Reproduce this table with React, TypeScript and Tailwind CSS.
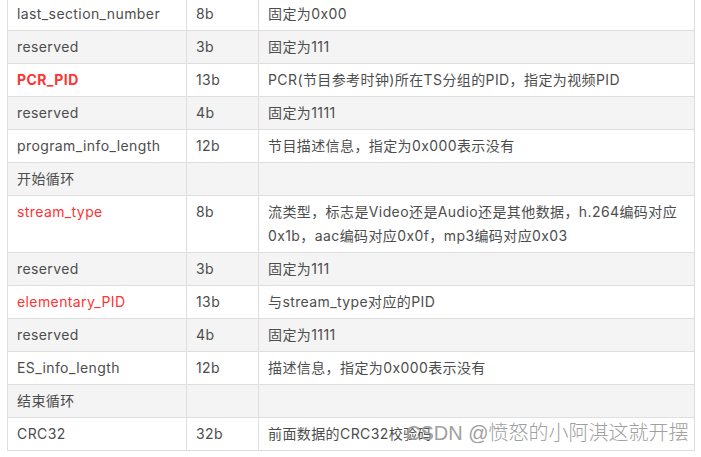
const rows: { name: string; bits: string; desc: string[]; red?: boolean; bold?: boolean }[] = [
  { name: "last_section_number", bits: "8b", desc: ["固定为0x00"] },
  { name: "reserved", bits: "3b", desc: ["固定为111"] },
  { name: "PCR_PID", bits: "13b", desc: ["PCR(节目参考时钟)所在TS分组的PID，指定为视频PID"], red: true, bold: true },
  { name: "reserved", bits: "4b", desc: ["固定为1111"] },
  { name: "program_info_length", bits: "12b", desc: ["节目描述信息，指定为0x000表示没有"] },
  { name: "开始循环", bits: "", desc: [""] },
  {
    name: "stream_type",
    bits: "8b",
    desc: ["流类型，标志是Video还是Audio还是其他数据，h.264编码对应", "0x1b，aac编码对应0x0f，mp3编码对应0x03"],
    red: true,
  },
  { name: "reserved", bits: "3b", desc: ["固定为111"] },
  { name: "elementary_PID", bits: "13b", desc: ["与stream_type对应的PID"], red: true },
  { name: "reserved", bits: "4b", desc: ["固定为1111"] },
  { name: "ES_info_length", bits: "12b", desc: ["描述信息，指定为0x000表示没有"] },
  { name: "结束循环", bits: "", desc: [""] },
  { name: "CRC32", bits: "32b", desc: ["前面数据的CRC32校验码"] },
];

export default function App() {
  return (
    <div
      className="relative h-[457px] w-[701px] overflow-hidden bg-white text-[14px] tracking-[0.4px] text-[#4d4d4d]"
      style={{ fontFamily: 'Inter, "Noto Sans CJK SC", sans-serif' }}
    >
      <table className="ml-[7px] mt-[-3px] w-[688px] border-collapse">
        <tbody>
          {rows.map((row, i) => (
            <tr key={i} className={i % 2 === 1 ? "bg-[#f4f4f4]" : "bg-white"}>
              <td
                className={`w-[179px] border border-[#dedede] py-[4px] pl-[9px] align-top leading-[24px] ${
                  row.red ? "text-[#ff3333]" : ""
                } ${row.bold ? "font-bold" : ""}`}
              >
                {row.name}
              </td>
              <td className="w-[72px] border border-[#dedede] py-[4px] pl-[9px] align-top leading-[24px]">
                {row.bits}
              </td>
              <td className="border border-[#dedede] py-[4px] pl-[9px] align-top leading-[24px]">
                {row.desc.map((line, j) => (
                  <div key={j} className="h-[24px] whitespace-nowrap">
                    {line}
                  </div>
                ))}
              </td>
            </tr>
          ))}
        </tbody>
      </table>
      <div
        className="absolute left-[406px] top-[421px] whitespace-nowrap text-[20px] font-light leading-[24px] tracking-normal text-[#a0a0a0]"
        style={{ fontFamily: '"Liberation Sans", "Noto Sans CJK SC", sans-serif' }}
      >
        CSDN @愤怒的小阿淇这就开摆
      </div>
    </div>
  );
}
